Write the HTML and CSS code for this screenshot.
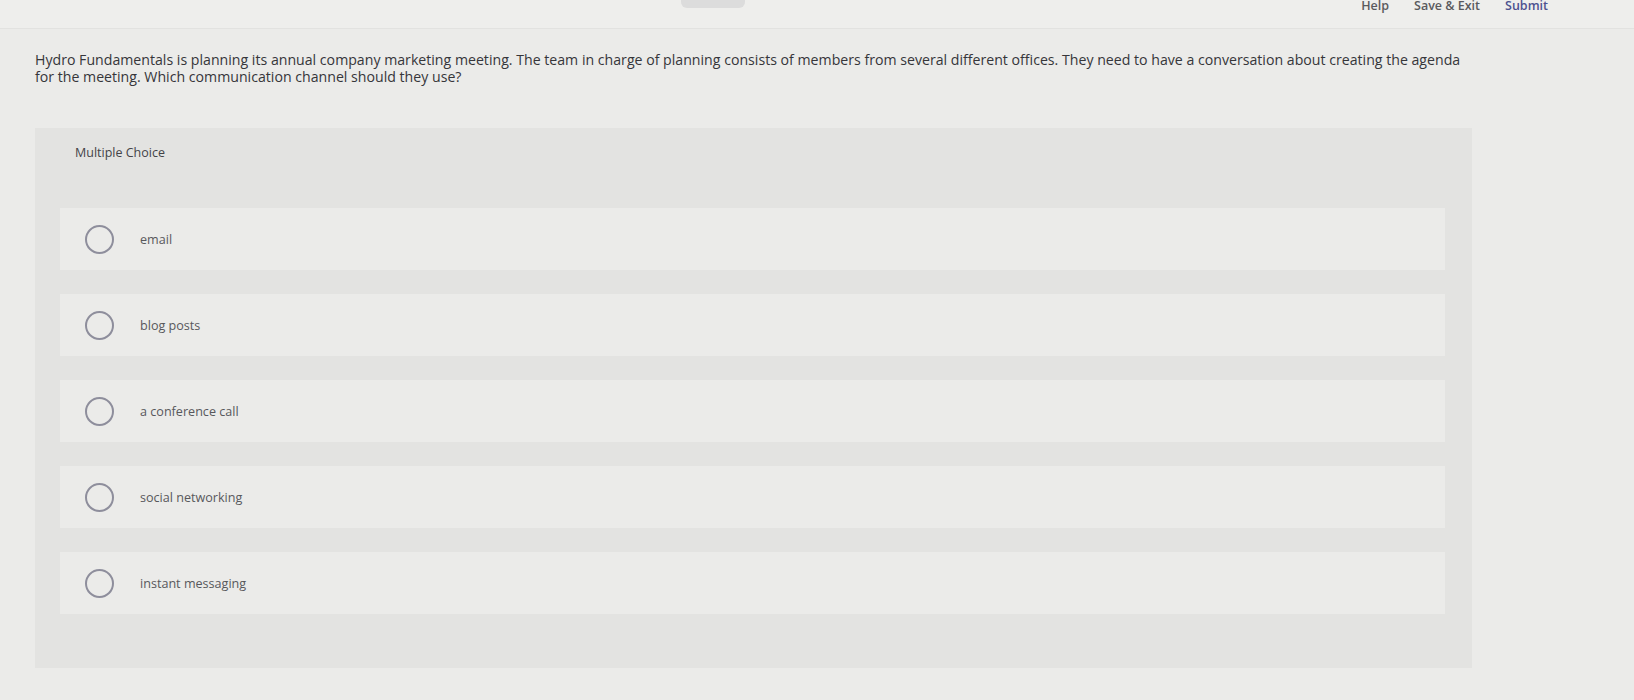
FILE: index.html
```html
<!DOCTYPE html>
<html>
<head>
<meta charset="utf-8">
<link rel="stylesheet" href="styles.css">
</head>
<body>
<div class="topbar">
  <div class="ghost-btn"></div>
  <nav class="links">
    <span class="link">Help</span>
    <span class="link">Save &amp; Exit</span>
    <span class="link submit">Submit</span>
  </nav>
</div>
<main class="content">
  <p class="question">Hydro Fundamentals is planning its annual company marketing meeting. The team in charge of planning consists of members from several different offices. They need to have a conversation about creating the agenda for the meeting. Which communication channel should they use?</p>
  <section class="panel">
    <div class="panel-head">Multiple Choice</div>
    <ul class="options">
      <li class="option"><span class="radio"></span><span class="label">email</span></li>
      <li class="option"><span class="radio"></span><span class="label">blog posts</span></li>
      <li class="option"><span class="radio"></span><span class="label">a conference call</span></li>
      <li class="option"><span class="radio"></span><span class="label">social networking</span></li>
      <li class="option"><span class="radio"></span><span class="label">instant messaging</span></li>
    </ul>
  </section>
</main>
</body>
</html>
```
FILE: styles.css
```css
html, body {
  margin: 0;
  padding: 0;
}
body {
  background: #ebebe9;
  font-family: "Open Sans", "Liberation Sans", sans-serif;
  color: #3a3a3e;
  width: 1634px;
  height: 700px;
  overflow: hidden;
}
.topbar {
  position: relative;
  height: 28px;
  background: #eeeeec;
  border-bottom: 1px solid #e2e2e0;
  display: flex;
  justify-content: flex-end;
  align-items: flex-start;
  padding-right: 86px;
}
.ghost-btn {
  position: absolute;
  left: 681px;
  top: -8px;
  width: 64px;
  height: 16px;
  border-radius: 6px;
  background: #dcdcdc;
}
.links {
  display: flex;
  gap: 25px;
  font-size: 12.5px;
  font-weight: 600;
  line-height: 12px;
}
.link {
  color: #5a5a5e;
}
.link.submit {
  color: #4d5290;
}
.content {
  padding: 0 0 0 35px;
}
.question {
  margin: 22px 0 0;
  width: 1440px;
  font-size: 14.15px;
  line-height: 17px;
  color: #36363a;
}
.panel {
  margin-top: 43px;
  width: 1437px;
  height: 540px;
  background: #e3e3e1;
  box-sizing: border-box;
  padding: 18px 27px 0 25px;
}
.panel-head {
  padding-left: 15px;
  font-size: 12.5px;
  line-height: 14px;
  color: #444448;
}
.options {
  list-style: none;
  margin: 48px 0 0;
  padding: 0;
  display: flex;
  flex-direction: column;
  gap: 24px;
}
.option {
  height: 62px;
  background: #ebebe9;
  display: flex;
  align-items: center;
  padding-left: 25px;
}
.radio {
  width: 25px;
  height: 25px;
  border: 2px solid #8e8e9c;
  border-radius: 50%;
  flex: none;
}
.label {
  margin-left: 26px;
  font-size: 12.6px;
  color: #58585c;
}
```
